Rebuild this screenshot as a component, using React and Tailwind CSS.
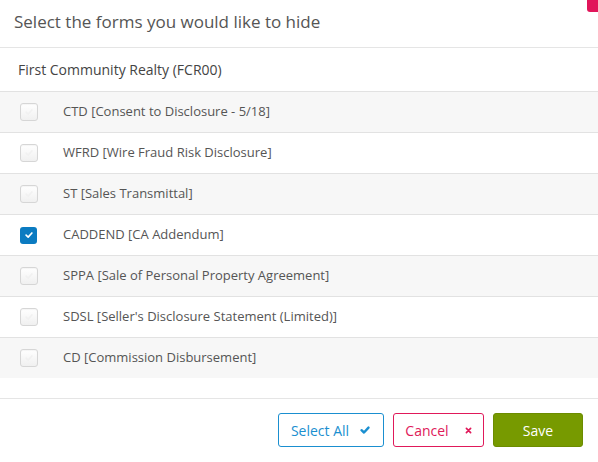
const FONT = { fontFamily: '"Open Sans", "Noto Sans", sans-serif' }

const forms = [
  { code: 'CTD', name: 'Consent to Disclosure - 5/18' },
  { code: 'WFRD', name: 'Wire Fraud Risk Disclosure' },
  { code: 'ST', name: 'Sales Transmittal' },
  { code: 'CADDEND', name: 'CA Addendum', checked: true },
  { code: 'SPPA', name: 'Sale of Personal Property Agreement' },
  { code: 'SDSL', name: "Seller's Disclosure Statement (Limited)" },
  { code: 'CD', name: 'Commission Disbursement' },
]

function Check({ className, width = 2 }) {
  return (
    <svg viewBox="0 0 12 12" className={className} fill="none">
      <path d="M2.5 6.2 5 8.5 9.5 3.6" stroke="currentColor" strokeWidth={width} strokeLinecap="round" strokeLinejoin="round" />
    </svg>
  )
}

function Box({ checked }) {
  if (checked) {
    return (
      <span className="flex h-[17px] w-[17px] items-center justify-center rounded-[3px] bg-[#0b7bc1] text-white">
        <Check className="h-[10px] w-[10px]" />
      </span>
    )
  }
  return (
    <span className="flex h-[18px] w-[18px] items-center justify-center rounded-[3px] border border-[#d6d6d6] bg-gradient-to-b from-white to-[#f0f0f0] text-[#f1f1f1] shadow-[inset_0_1px_1px_rgba(0,0,0,0.04)]">
      <Check className="h-[10px] w-[10px]" />
    </span>
  )
}

export default function App() {
  return (
    <div className="relative h-[462px] w-[598px] overflow-hidden bg-white text-[#555]" style={FONT}>
      <div className="absolute left-[587px] top-[-10px] flex h-[22px] w-[22px] items-end justify-start rounded-[3px] bg-[#e1155a] pb-[11px] pl-[2px] text-white">
        <svg viewBox="0 0 10 10" className="h-[10px] w-[10px]" fill="none">
          <path d="M2 2l6 6M8 2l-6 6" stroke="currentColor" strokeWidth="2" strokeLinecap="round" />
        </svg>
      </div>

      <div className="flex h-[48px] items-center border-b border-[#e5e5e5] pl-[14px] pb-[3px] text-[17px] text-[#555]">
        Select the forms you would like to hide
      </div>

      <div className="flex h-[43px] items-center pl-[18px] text-[14px] text-[#444]">
        First Community Realty (FCR00)
      </div>

      <div>
        {forms.map((f, i) => (
          <div
            key={f.code}
            className={`flex h-[41px] items-center border-t border-[#e2e2e2] ${i % 2 === 0 ? 'bg-[#f7f7f7]' : 'bg-white'}`}
          >
            <div className="flex w-[63px] justify-start pl-[20px]">
              <Box checked={f.checked} />
            </div>
            <span className="text-[13px] text-[#555]">
              {f.code} [{f.name}]
            </span>
          </div>
        ))}
      </div>

      <div className="mt-[20px] flex justify-end gap-[9px] border-t border-[#e5e5e5] pt-[14px] pr-[15px]">
        <button className="flex h-[34px] w-[106px] items-center justify-center gap-[10px] rounded-[3px] border border-[#1a8fd0] bg-white text-[14px] text-[#1a8fd0]">
          Select All
          <Check className="h-[12px] w-[12px]" width={2.4} />
        </button>
        <button className="flex h-[34px] w-[91px] items-center justify-center gap-[16px] rounded-[3px] border border-[#e0195a] bg-white text-[14px] text-[#e0195a]">
          Cancel
          <svg viewBox="0 0 10 10" className="h-[7px] w-[7px]" fill="none">
            <path d="M2 2l6 6M8 2l-6 6" stroke="currentColor" strokeWidth="2.4" strokeLinecap="round" />
          </svg>
        </button>
        <button className="flex h-[34px] w-[90px] items-center justify-center rounded-[3px] border border-[#6c8c00] bg-[#779a00] text-[14px] text-white">
          Save
        </button>
      </div>
    </div>
  )
}
